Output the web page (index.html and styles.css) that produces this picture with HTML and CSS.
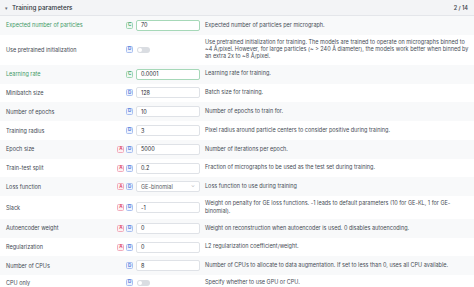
FILE: index.html
```html
<!DOCTYPE html>
<html>
<head>
<meta charset="utf-8">
<link rel="stylesheet" href="styles.css">
</head>
<body>
<div class="panel">
  <div class="panel-head">
    <span class="caret">▾</span>
    <span class="title">Training parameters</span>
    <span class="count">2 / 14</span>
  </div>

  <div class="row changed">
    <div class="label">Expected number of particles</div>
    <div class="badges"><span class="badge c">C</span></div>
    <div class="control"><div class="input">70</div></div>
    <div class="desc">Expected number of particles per micrograph.</div>
  </div>

  <div class="row">
    <div class="label">Use pretrained initialization</div>
    <div class="badges"><span class="badge d">D</span></div>
    <div class="control"><span class="toggle"><span class="knob"></span></span></div>
    <div class="desc">Use pretrained initialization for training. The models are trained to operate on micrographs binned to ~4 Å/pixel. However, for large particles (~ &gt; 240 Å diameter), the models work better when binned by an extra 2x to ~8 Å/pixel.</div>
  </div>

  <div class="row changed">
    <div class="label">Learning rate</div>
    <div class="badges"><span class="badge c">C</span></div>
    <div class="control"><div class="input">0.0001</div></div>
    <div class="desc">Learning rate for training.</div>
  </div>

  <div class="row">
    <div class="label">Minibatch size</div>
    <div class="badges"><span class="badge d">D</span></div>
    <div class="control"><div class="input">128</div></div>
    <div class="desc">Batch size for training.</div>
  </div>

  <div class="row">
    <div class="label">Number of epochs</div>
    <div class="badges"><span class="badge d">D</span></div>
    <div class="control"><div class="input">10</div></div>
    <div class="desc">Number of epochs to train for.</div>
  </div>

  <div class="row">
    <div class="label">Training radius</div>
    <div class="badges"><span class="badge d">D</span></div>
    <div class="control"><div class="input">3</div></div>
    <div class="desc">Pixel radius around particle centers to consider positive during training.</div>
  </div>

  <div class="row">
    <div class="label">Epoch size</div>
    <div class="badges"><span class="badge a">A</span><span class="badge d">D</span></div>
    <div class="control"><div class="input">5000</div></div>
    <div class="desc">Number of iterations per epoch.</div>
  </div>

  <div class="row">
    <div class="label">Train-test split</div>
    <div class="badges"><span class="badge a">A</span><span class="badge d">D</span></div>
    <div class="control"><div class="input">0.2</div></div>
    <div class="desc">Fraction of micrographs to be used as the test set during training.</div>
  </div>

  <div class="row">
    <div class="label">Loss function</div>
    <div class="badges"><span class="badge a">A</span><span class="badge d">D</span></div>
    <div class="control"><div class="input select"><span>GE-binomial</span><span class="chev">⌄</span></div></div>
    <div class="desc">Loss function to use during training</div>
  </div>

  <div class="row">
    <div class="label">Slack</div>
    <div class="badges"><span class="badge a">A</span><span class="badge d">D</span></div>
    <div class="control"><div class="input">-1</div></div>
    <div class="desc">Weight on penalty for GE loss functions. -1 leads to default parameters (10 for GE-KL, 1 for GE-binomial).</div>
  </div>

  <div class="row">
    <div class="label">Autoencoder weight</div>
    <div class="badges"><span class="badge a">A</span><span class="badge d">D</span></div>
    <div class="control"><div class="input">0</div></div>
    <div class="desc">Weight on reconstruction when autoencoder is used. 0 disables autoencoding.</div>
  </div>

  <div class="row">
    <div class="label">Regularization</div>
    <div class="badges"><span class="badge a">A</span><span class="badge d">D</span></div>
    <div class="control"><div class="input">0</div></div>
    <div class="desc">L2 regularization coefficient/weight.</div>
  </div>

  <div class="row">
    <div class="label">Number of CPUs</div>
    <div class="badges"><span class="badge d">D</span></div>
    <div class="control"><div class="input">8</div></div>
    <div class="desc">Number of CPUs to allocate to data augmentation. If set to less than 0, uses all CPU available.</div>
  </div>

  <div class="row">
    <div class="label">CPU only</div>
    <div class="badges"><span class="badge d">D</span></div>
    <div class="control"><span class="toggle"><span class="knob"></span></span></div>
    <div class="desc">Specify whether to use GPU or CPU.</div>
  </div>
</div>
</body>
</html>
```

FILE: styles.css
```css
html, body {
  margin: 0;
  padding: 0;
  background: #ffffff;
}
body {
  font-family: Inter, "Noto Sans", "Liberation Sans", sans-serif;
  font-size: 5.5px;
  color: #3d434c;
  width: 474px;
  height: 287px;
  overflow: hidden;
}
.panel {
  width: 474px;
}
.panel-head {
  display: flex;
  align-items: center;
  height: 16px;
  background: #f3f4f6;
  border-bottom: 1px solid #e4e6ea;
  box-sizing: border-box;
  padding: 0 6px 0 5px;
}
.caret {
  font-size: 5px;
  color: #666b73;
  width: 7px;
}
.title {
  font-size: 6.3px;
  font-weight: 500;
  color: #2f343b;
  flex: 1;
}
.count {
  font-size: 5.5px;
  font-weight: 600;
  color: #454a52;
}
.row {
  display: grid;
  grid-template-columns: 106px 24px 64px 1fr;
  column-gap: 0;
  align-items: center;
  padding: 3.9px 4px 3.9px 6px;
}
.row:nth-child(even) {
  background: #f8f9fa;
}
.label {
  color: #434952;
}
.row.changed .label {
  color: #3e9966;
}
.badges {
  display: flex;
  justify-content: flex-end;
  gap: 2px;
  padding-right: 3px;
}
.badge {
  box-sizing: border-box;
  width: 6.8px;
  height: 7px;
  border: 0.8px solid;
  border-radius: 1.5px;
  font-size: 4.6px;
  line-height: 1;
  font-weight: 600;
  display: flex;
  align-items: center;
  justify-content: center;
}
.badge.c { color: #3b9a61; border-color: #9fd5b4; background: #eef9f2; }
.badge.d { color: #3f6fd6; border-color: #a8bff0; background: #eef3fd; }
.badge.a { color: #d8476a; border-color: #f2aabb; background: #fdf0f3; }
.control {
  display: flex;
  align-items: center;
}
.input {
  box-sizing: border-box;
  width: 64px;
  height: 11px;
  border: 0.8px solid #dfe2e7;
  border-radius: 2px;
  background: #fff;
  padding: 0 4px;
  display: flex;
  align-items: center;
  color: #25292f;
  font-size: 5.5px;
}
.row.changed .input {
  border-color: #a6d8b8;
}
.select {
  justify-content: space-between;
  color: #555a62;
}
.chev {
  color: #9aa0a8;
  font-size: 5px;
  line-height: 5px;
  margin-top: -2px;
}
.toggle {
  display: inline-block;
  position: relative;
  width: 13px;
  height: 6px;
  border-radius: 3px;
  background: #dadde2;
  margin-left: 1px;
}
.knob {
  position: absolute;
  left: 0.8px;
  top: 0.8px;
  width: 4.4px;
  height: 4.4px;
  border-radius: 50%;
  background: #fff;
}
.desc {
  padding-left: 5px;
  line-height: 7.4px;
  color: #464c55;
}
```
